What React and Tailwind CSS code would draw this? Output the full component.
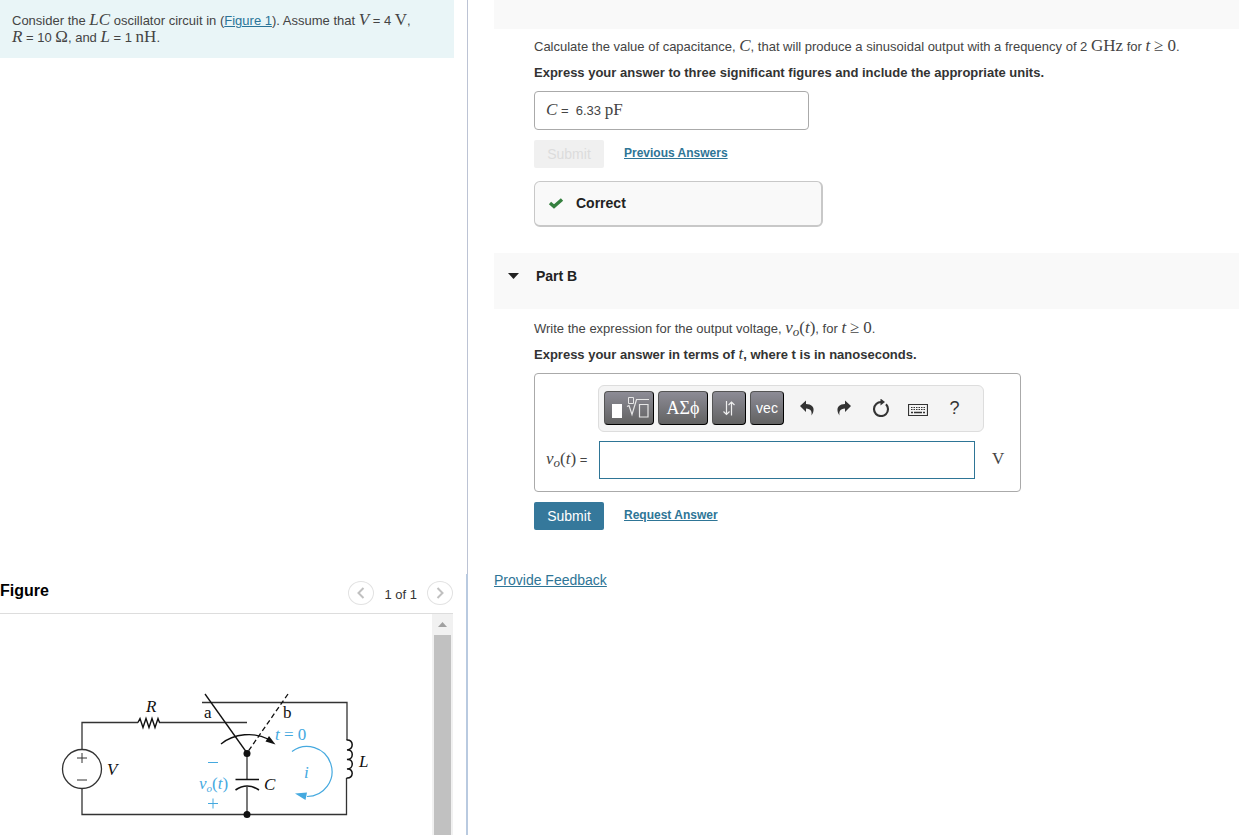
import React from "react";

function Var({ children }) {
  return (
    <i className="font-['Liberation_Serif',serif] text-[17px] leading-0 font-normal italic">{children}</i>
  );
}

function Rm({ children }) {
  return (
    <span className="font-['Liberation_Serif',serif] text-[17px] leading-0 font-normal">{children}</span>
  );
}

function OutputVoltage() {
  return (
    <span className="whitespace-nowrap">
      <Var>v</Var>
      <sub className="font-['Liberation_Serif',serif] text-[13px] leading-0 italic">o</sub>
      <Rm>(</Rm>
      <Var>t</Var>
      <Rm>)</Rm>
    </span>
  );
}

function Circuit() {
  return (
    <svg
      className="block h-[221px] w-[432px] shrink-0"
      viewBox="0 614 432 221"
      fill="none"
      role="img"
      aria-label="LC oscillator circuit"
    >
      <g stroke="#333" strokeWidth="1.3">
        <path d="M82 749V722.5H138M159 722.5H247" />
        <path d="M82 789V814.5H346.5V778" />
        <path d="M202 702.5H347V740" />
        <path d="M247 753V779M247 787V814" />
        <circle cx="82" cy="769" r="19.5" />
        <path d="M77 758h10M82 753v10M77 780h10" strokeWidth="1" />
      </g>
      <path d="M138 722.5l2 -4 3 9 3 -9 3 9 3 -9 3 9 3 -9 1.5 4" stroke="#111" strokeWidth="1.4" />
      <path d="M205 694L247 753" stroke="#111" strokeWidth="1.3" />
      <path d="M288 694L247 753" stroke="#111" strokeWidth="1.3" strokeDasharray="5 3" />
      <path d="M221 744C234 733 255 732 268 739" stroke="#111" strokeWidth="1.3" />
      <path d="M275.5 744.5L265.5 741.5L269 736Z" fill="#111" />
      <circle cx="247" cy="753.5" r="3.5" fill="#111" />
      <circle cx="247" cy="814.5" r="3.5" fill="#111" />
      <path d="M235.5 779.5H259M235.5 790Q247 782 259 790" stroke="#111" strokeWidth="1.6" />
      <path
        d="M346.5 740C354 739 354 750 347 750C354 749 354 759.5 347 759.5C354 758.5 354 769 347 769C354 768 354 779 346.5 778"
        stroke="#111"
        strokeWidth="1.5"
      />
      <g stroke="#45a9df" strokeWidth="1.2">
        <path d="M292 751.5A25 25 0 1 1 307 796.5" />
        <path d="M208 762.5h10M208 803.5h10M213 798.5v10" strokeWidth="1" />
      </g>
      <path d="M295 793.5L307 792.5L305.5 800Z" fill="#45a9df" />
      <g fill="#111" fontFamily="'Liberation Serif', serif" fontSize="17">
        <text x="146" y="712" fontStyle="italic">R</text>
        <text x="107" y="775" fontStyle="italic">V</text>
        <text x="264" y="790" fontStyle="italic">C</text>
        <text x="359" y="767" fontStyle="italic">L</text>
        <text x="204" y="718">a</text>
        <text x="283" y="718">b</text>
      </g>
      <g fill="#45a9df" fontFamily="'Liberation Serif', serif" fontSize="17">
        <text x="275" y="740"><tspan fontStyle="italic">t</tspan> = 0</text>
        <text x="304" y="778" fontStyle="italic">i</text>
        <text x="199" y="789">
          <tspan fontStyle="italic">v</tspan>
          <tspan fontStyle="italic" fontSize="11" dy="3">o</tspan>
          <tspan dy="-3">(</tspan>
          <tspan fontStyle="italic">t</tspan>
          <tspan>)</tspan>
        </text>
      </g>
    </svg>
  );
}

function RoundButton({ label, d }) {
  return (
    <button
      type="button"
      aria-label={label}
      className="flex h-6 w-[26px] items-center justify-center rounded-[50%] border border-[#e2e2e2] bg-white"
    >
      <svg className="h-3 w-3" viewBox="0 0 12 12" fill="none" stroke="#c0c0c0" strokeWidth="2">
        <path d={d} />
      </svg>
    </button>
  );
}

function KeyButton({ label, wide, children }) {
  const size = wide ? "w-[50px]" : "w-[34px]";
  return (
    <button
      type="button"
      aria-label={label}
      className={`${size} flex h-[34px] items-center justify-center rounded-[4px] border border-t-[#555] border-r-black border-b-black border-l-[#555] bg-linear-to-b from-[#8d8c96] to-[#626262] text-white`}
    >
      {children}
    </button>
  );
}

function ToolButton({ label, children }) {
  return (
    <button type="button" aria-label={label} className="flex h-[34px] w-[37px] items-center justify-center text-[#333]">
      {children}
    </button>
  );
}

function Toolbar() {
  return (
    <div className="ml-[63px] flex h-[47px] w-[386px] items-start gap-1 rounded-[6px] border border-[#ddd] bg-[#f4f4f4] pt-[5px] pl-[5px]">
      <KeyButton wide label="Templates">
        <svg className="h-6 w-10" viewBox="0 0 40 24" fill="none">
          <path d="M3 8h10v14h-10z" fill="#fff" />
          <path d="M19.5 1.5h5v6h-5z" stroke="#e5e5e5" />
          <path d="M18 10.5l2 -1 3 9 4.5 -15H40" stroke="#e5e5e5" strokeWidth="1.2" />
          <path d="M30.5 8.5h8.5v12.5h-8.5z" stroke="#e5e5e5" strokeWidth="1.2" />
        </svg>
      </KeyButton>
      <KeyButton wide label="Greek symbols">
        <span className="font-['Liberation_Serif',serif] text-[18px] leading-none">ΑΣϕ</span>
      </KeyButton>
      <KeyButton label="Arrows">
        <svg className="h-4 w-3.5" viewBox="0 0 14 16" fill="none" stroke="#eee" strokeWidth="1.2">
          <path d="M4.5 1V14.5M1.5 11.5l3 3 3 -3M9.5 15.5V2M6.5 5l3 -3 3 3" />
        </svg>
      </KeyButton>
      <KeyButton label="Vector">
        <span className="text-[14px] leading-none">vec</span>
      </KeyButton>
      <div className="flex">
        <ToolButton label="Undo">
          <svg className="h-4 w-3.5" viewBox="0 0 14 16" fill="currentColor">
            <path d="M0 6L6 .5V4C11.5 4 14 7 13.5 10.5C13.3 12.5 12.5 14 11.5 15.5C12 11 11 9 6 8.5V12Z" />
          </svg>
        </ToolButton>
        <ToolButton label="Redo">
          <svg className="h-4 w-3.5" viewBox="0 0 14 16" fill="currentColor">
            <path d="M14 6L8 .5V4C2.5 4 0 7 .5 10.5C.7 12.5 1.5 14 2.5 15.5C2 11 3 9 8 8.5V12Z" />
          </svg>
        </ToolButton>
        <ToolButton label="Reset">
          <svg className="h-[18px] w-[18px]" viewBox="0 0 18 18" fill="none">
            <path d="M9.5 3A7 7 0 0 0 4.2 5A7 7 0 1 0 14 5.2" stroke="currentColor" strokeWidth="2.1" />
            <path d="M8.5 -.5L13 3L8.5 6.5Z" fill="currentColor" />
          </svg>
        </ToolButton>
        <ToolButton label="Keyboard">
          <svg className="mt-1 h-3 w-5" viewBox="0 0 20 12" fill="none" stroke="currentColor">
            <path d="M.5 .5h19v11h-19z" strokeWidth="1.2" />
            <path d="M3 3.5h15M3 5.5h15" strokeDasharray="1.5 1" strokeWidth="1.2" />
            <path d="M3 8.5h2M6 8.5h8M15 8.5h2" strokeWidth="1.4" />
          </svg>
        </ToolButton>
        <ToolButton label="Help">
          <span className="text-[18px] leading-none">?</span>
        </ToolButton>
      </div>
    </div>
  );
}

export default function App() {
  return (
    <div className="grid min-h-screen grid-cols-[468px_1fr] bg-white font-['Liberation_Sans',Arial,sans-serif] text-[13px] text-[#444]">
      <aside className="flex flex-col justify-between">
        <div className="flex flex-1 border-r border-[#bcc3d4]">
          <p className="h-[58px] w-[454px] bg-[#e9f5f7] px-3 pt-3 leading-[17px]">
            Consider the <Var>LC</Var> oscillator circuit in (
            <a href="#figure" className="text-[#2a7499] underline">Figure 1</a>
            ). Assume that <Var>V</Var> = 4 <Rm>V</Rm>,
            <br />
            <Var>R</Var> = 10 <Rm>Ω</Rm>, and <Var>L</Var> = 1 <Rm>nH</Rm>.
          </p>
        </div>
        <section id="figure" className="border-r-2 border-[#b9cae0] pr-[13px]">
          <header className="flex h-10 items-start justify-between border-b border-[#ddd]">
            <h2 className="pt-[9px] text-[16px] leading-4 font-bold text-black">Figure</h2>
            <div className="flex items-center gap-2.5 pt-[7px]">
              <RoundButton label="Previous figure" d="M8.5 1L3.5 6L8.5 11" />
              <span className="pt-1 text-[13px] leading-4 text-[#333]">1 of 1</span>
              <RoundButton label="Next figure" d="M3.5 1L8.5 6L3.5 11" />
            </div>
          </header>
          <div className="flex h-[221px]">
            <Circuit />
            <div className="flex flex-1 flex-col items-center bg-[#f1f1f1]">
              <svg className="my-2 h-[5px] w-[9px]" viewBox="0 0 9 5">
                <path d="M0 5L4.5 0L9 5Z" fill="#a0a0a0" />
              </svg>
              <div className="w-[17px] flex-1 bg-[#c1c1c1]" />
            </div>
          </div>
        </section>
      </aside>

      <main className="pl-[26px]">
        <div className="h-[29px] bg-[#f9f9f9]" />
        <section className="pl-10">
          <p className="pt-2.5 leading-4">
            Calculate the value of capacitance, <Var>C</Var>, that will produce a sinusoidal output with a frequency of 2{" "}
            <Rm>GHz</Rm> for <Var>t</Var> <Rm>≥ 0</Rm>.
          </p>
          <p className="pt-2.5 leading-4 font-bold text-[#333]">
            Express your answer to three significant figures and include the appropriate units.
          </p>
          <div className="mt-2.5 flex h-[39px] w-[275px] items-center rounded-[4px] border border-[#aaa] px-[11px] leading-4 whitespace-pre">
            <span><Var>C</Var> =  6.33 <Rm>pF</Rm></span>
          </div>
          <div className="mt-2.5 flex gap-5">
            <button type="button" disabled className="h-7 w-[70px] rounded-[2px] bg-[#f0f0f0] text-[14px] text-[#dcdcdc]">
              Submit
            </button>
            <a href="#previous" className="pt-[5px] text-[12px] leading-4 font-bold text-[#2e7596] underline">
              Previous Answers
            </a>
          </div>
          <div className="mt-[13px] flex h-[46px] w-[289px] items-center gap-3 rounded-[6px] border border-r-2 border-b-2 border-[#c8c8c8] bg-[#f9f9f9] pl-[13px] text-[14px] font-bold text-[#222]">
            <svg className="h-3 w-4" viewBox="0 0 16 12" fill="none" stroke="#35803f" strokeWidth="3.4">
              <path d="M2 5L6 8.5L14 1.5" />
            </svg>
            Correct
          </div>
        </section>

        <h2 className="mt-[26px] flex h-14 items-start bg-[#f9f9f9] pt-[15px] pl-3.5 text-[14px] leading-4 font-bold text-[#222]">
          <button type="button" className="flex items-center gap-[17px]">
            <svg className="h-[6px] w-[11px]" viewBox="0 0 11 6">
              <path d="M0 0H11L5.5 6Z" fill="#222" />
            </svg>
            Part B
          </button>
        </h2>
        <section className="pl-10">
          <p className="pt-3 leading-4">
            Write the expression for the output voltage, <OutputVoltage />, for <Var>t</Var> <Rm>≥ 0</Rm>.
          </p>
          <p className="pt-2.5 leading-4 font-bold text-[#333]">
            Express your answer in terms of <Var>t</Var>, where t is in nanoseconds.
          </p>
          <div className="mt-2.5 h-[119px] w-[487px] rounded-[4px] border border-[#aaa] pt-[11px]">
            <Toolbar />
            <div className="mt-[9px] flex items-center pl-[11px] leading-4">
              <label htmlFor="answer" className="w-[53px] whitespace-nowrap">
                <OutputVoltage /> =
              </label>
              <input id="answer" type="text" className="h-[38px] w-[376px] border border-[#2e7596] bg-white px-2 outline-none" />
              <span className="pl-[17px]"><Rm>V</Rm></span>
            </div>
          </div>
          <div className="mt-2.5 flex gap-5">
            <button type="button" className="h-7 w-[70px] rounded-[2px] bg-[#35789b] text-[14px] text-white">
              Submit
            </button>
            <a href="#request" className="pt-[5px] text-[12px] leading-4 font-bold text-[#2e7596] underline">
              Request Answer
            </a>
          </div>
        </section>
        <a href="#feedback" className="mt-[42px] inline-block text-[14px] leading-4 text-[#2e7596] underline">
          Provide Feedback
        </a>
      </main>
    </div>
  );
}
